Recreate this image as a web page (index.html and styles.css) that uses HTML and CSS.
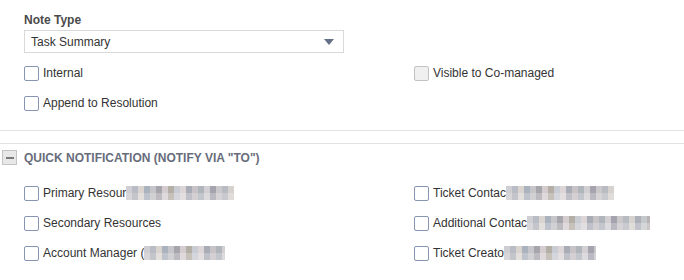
FILE: index.html
```html
<!DOCTYPE html>
<html>
<head>
<meta charset="utf-8">
<link rel="stylesheet" href="styles.css">
</head>
<body>
<div class="top">
  <div class="label">Note Type</div>
  <div class="select"><span>Task Summary</span><span class="caret"></span></div>
  <div class="grid">
    <div class="row"><span class="box"></span><span>Internal</span></div>
    <div class="row"><span class="box disabled"></span><span>Visible to Co-managed</span></div>
    <div class="row"><span class="box"></span><span>Append to Resolution</span></div>
    <div class="row"></div>
  </div>
</div>
<div class="section">
  <div class="head"><span class="minus"><span class="dash"></span></span><span class="title">QUICK NOTIFICATION (NOTIFY VIA "TO")</span></div>
  <div class="grid list">
    <div class="row"><span class="box"></span><span>Primary Resour</span><span class="blur w1"></span></div>
    <div class="row"><span class="box"></span><span>Ticket Contac</span><span class="blur w2"></span></div>
    <div class="row"><span class="box"></span><span>Secondary Resources</span></div>
    <div class="row"><span class="box"></span><span>Additional Contac</span><span class="blur w3"></span></div>
    <div class="row"><span class="box"></span><span>Account Manager (</span><span class="blur w4"></span></div>
    <div class="row"><span class="box"></span><span>Ticket Creato</span><span class="blur w5"></span></div>
  </div>
</div>
</body>
</html>
```
FILE: styles.css
```css
html, body {
  margin: 0;
  padding: 0;
  background: #fff;
}
body {
  font-family: "Liberation Sans", Arial, sans-serif;
  font-size: 12px;
  color: #333;
  width: 684px;
  height: 280px;
  overflow: hidden;
}
.top {
  padding: 13px 0 12px 24px;
  border-bottom: 1px solid #e2e2e2;
}
.label {
  font-weight: bold;
  color: #4a4a4a;
  line-height: 14px;
  margin-bottom: 3px;
}
.select {
  box-sizing: border-box;
  width: 320px;
  height: 23px;
  border: 1px solid #d9d9d9;
  display: flex;
  align-items: center;
  justify-content: space-between;
  padding: 0 9px 0 6px;
  color: #333;
}
.caret {
  width: 0;
  height: 0;
  border-left: 5px solid transparent;
  border-right: 5px solid transparent;
  border-top: 6px solid #647088;
  margin-top: 1px;
}
.grid {
  display: grid;
  grid-template-columns: 390px 1fr;
  margin-top: 5px;
}
.row {
  display: flex;
  align-items: center;
  height: 30px;
  white-space: nowrap;
}
.box {
  box-sizing: border-box;
  width: 15px;
  height: 15px;
  border: 1px solid #8794b2;
  border-radius: 2px;
  background: #fff;
  margin-right: 4px;
  flex: none;
}
.box.disabled {
  background: #f0f0f0;
  border-color: #c2c2c2;
}
.section {
  margin-top: 12px;
  border-top: 1px solid #e2e2e2;
  padding-top: 6px;
}
.head {
  display: flex;
  align-items: center;
  padding-left: 2px;
  height: 15px;
}
.minus {
  box-sizing: border-box;
  width: 15px;
  height: 15px;
  border: 1px solid #c4c4c4;
  background: #e8e8e8;
  display: flex;
  align-items: center;
  justify-content: center;
  margin-right: 7px;
}
.dash {
  width: 8px;
  height: 2px;
  background: #7a7a7a;
}
.title {
  font-weight: bold;
  color: #676d7b;
}
.list {
  margin-top: 13px;
  padding-left: 24px;
}
.blur {
  display: inline-block;
  height: 14px;
  filter: blur(0.7px);
  background:
    linear-gradient(to right,
      #cfcfd3 0 6px, #b9bcc4 6px 12px, #d9d4cf 12px 18px, #aab2bd 18px 24px,
      #c6c6ca 24px 30px, #a7a5ac 30px 36px, #d5ccd0 36px 42px, #b3aea6 42px 48px,
      #c9ccd2 48px 54px, #dcd6d8 54px 60px, #a9abb5 60px 66px, #c8c3c6 66px 72px,
      #b0b4bb 72px 78px, #d3d0d4 78px 84px, #a5a3ae 84px 90px, #cbc8cc 90px 96px,
      #b9bbc3 96px 102px, #d6d2d0 102px 108px, #aeb0b9 108px 114px, #c6c9cc 114px 120px,
      #b8b3b6 120px 126px, #d2d4d9 126px 132px) top / 100% 7px no-repeat,
    linear-gradient(to right,
      #d8d6d9 0 6px, #c4c5cb 6px 12px, #e2dfdc 12px 18px, #bfc3cb 18px 24px,
      #d1d1d4 24px 30px, #bdbac0 30px 36px, #e0d9dc 36px 42px, #c6c2bb 42px 48px,
      #d4d6db 48px 54px, #e3dfe0 54px 60px, #bfc0c8 60px 66px, #d4cfd2 66px 72px,
      #c3c6cc 72px 78px, #dcdadd 78px 84px, #bbb9c2 84px 90px, #d6d3d6 90px 96px,
      #c9cad0 96px 102px, #e0dcda 102px 108px, #c2c3ca 108px 114px, #d4d6d8 114px 120px,
      #cac6c9 120px 126px, #dddfe3 126px 132px) bottom / 100% 7px no-repeat;
}
.w1 { width: 108px; }
.w2 { width: 108px; }
.w3 { width: 123px; }
.w4 { width: 81px; }
.w5 { width: 92px; }
```
